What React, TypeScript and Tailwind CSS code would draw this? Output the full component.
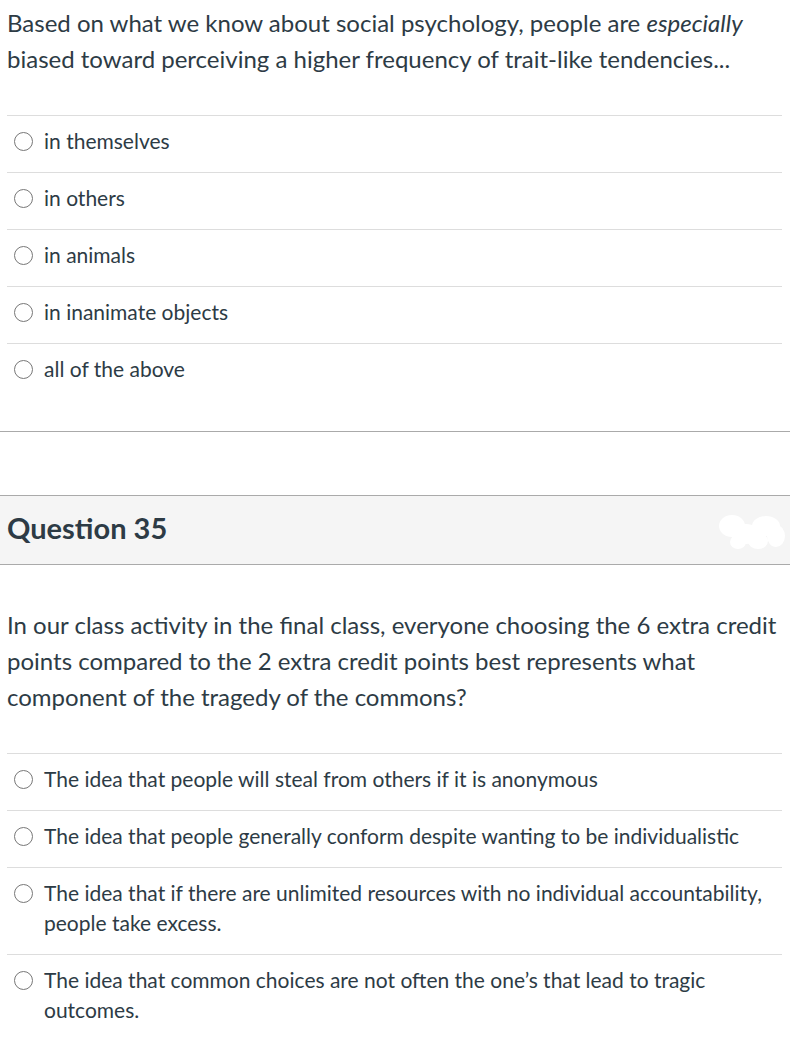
import React from "react";

const font = { fontFamily: "Lato, 'Open Sans', sans-serif" };

const q34 = ["in themselves", "in others", "in animals", "in inanimate objects", "all of the above"];

const q35 = [
  "The idea that people will steal from others if it is anonymous",
  "The idea that people generally conform despite wanting to be individualistic",
  "The idea that if there are unlimited resources with no individual accountability, people take excess.",
  "The idea that common choices are not often the one\u2019s that lead to tragic outcomes.",
];

function Radio() {
  return (
    <span className="mt-[6px] w-[19px] h-[19px] min-w-[19px] rounded-full border-[1.5px] border-[#777] bg-white" />
  );
}

function Answers({ items }: { items: string[] }) {
  return (
    <div className="ml-[7px] mr-[8px]">
      {items.map((t) => (
        <div key={t} className="flex gap-[11px] pl-[7px] pr-4 pt-[10px] pb-[16px] border-t border-[#ddd]">
          <Radio />
          <span className="text-[21px] leading-[30px] text-[#2d3b45]">{t}</span>
        </div>
      ))}
    </div>
  );
}

export default function App() {
  return (
    <div className="w-[790px] h-[1049px] bg-white overflow-hidden" style={font}>
      {/* Question 34 (tail) */}
      <p className="px-[7px] pt-[5px] text-[24px] leading-[36px] text-[#2d3b45]">
        Based on what we know about social psychology, people are <em>especially</em> biased toward perceiving a
        higher frequency of trait-like tendencies...
      </p>
      <div className="mt-[38px]">
        <Answers items={q34} />
      </div>
      <div className="mt-[31px] border-t border-[#aaa]" />

      {/* Question 35 */}
      <div className="mt-[63px] h-[70px] flex items-center justify-between bg-[#f5f5f5] border-y border-[#aaa] pl-[7px]">
        <h2 className="mb-[4px] text-[29px] font-bold text-[#2d3b45]">Question 35</h2>
        <svg width="70" height="40" viewBox="0 0 70 40" className="mr-[2px] mt-[4px]">
          <g fill="#fff">
            <ellipse cx="14" cy="14" rx="13" ry="11" />
            <ellipse cx="28" cy="22" rx="14" ry="10" />
            <ellipse cx="48" cy="14" rx="14" ry="10" />
            <ellipse cx="58" cy="24" rx="9" ry="11" />
            <ellipse cx="20" cy="30" rx="8" ry="7" />
            <ellipse cx="40" cy="29" rx="10" ry="8" />
          </g>
        </svg>
      </div>
      <p className="px-[7px] pt-[42px] pr-[10px] text-[24px] leading-[36px] text-[#2d3b45]">
        In our class activity in the final class, everyone choosing the 6 extra credit points compared to the 2 extra
        credit points best represents what component of the tragedy of the commons?
      </p>
      <div className="mt-[38px]">
        <Answers items={q35} />
      </div>
    </div>
  );
}
